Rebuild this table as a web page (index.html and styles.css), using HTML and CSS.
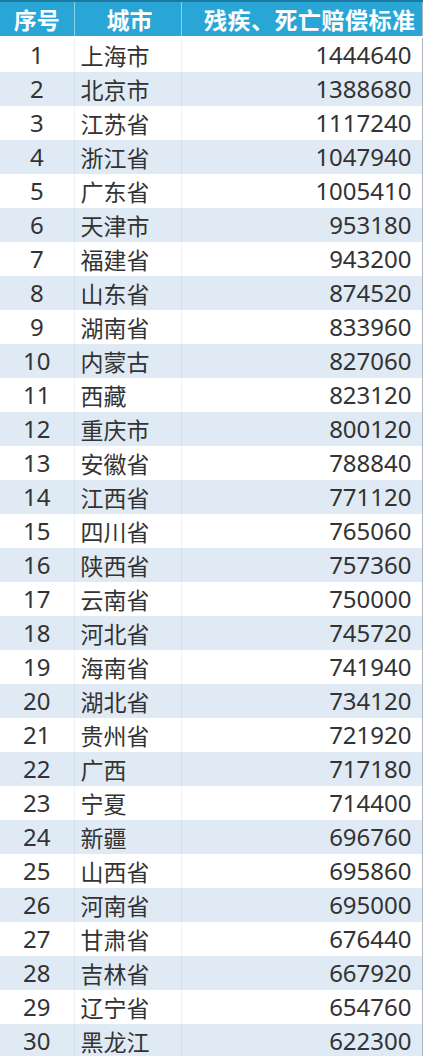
FILE: index.html
```html
<!DOCTYPE html>
<html lang="zh">
<head>
<meta charset="utf-8">
<link rel="stylesheet" href="styles.css">
</head>
<body>
<div class="wrap">
<table class="tbl">
<colgroup><col class="c1"><col class="c2"><col class="c3"></colgroup>
<thead>
<tr><th class="no">序号</th><th class="city">城市</th><th class="val">残疾、死亡赔偿标准</th></tr>
</thead>
<tbody>
<tr><td class="no">1</td><td class="city">上海市</td><td class="val">1444640</td></tr>
<tr><td class="no">2</td><td class="city">北京市</td><td class="val">1388680</td></tr>
<tr><td class="no">3</td><td class="city">江苏省</td><td class="val">1117240</td></tr>
<tr><td class="no">4</td><td class="city">浙江省</td><td class="val">1047940</td></tr>
<tr><td class="no">5</td><td class="city">广东省</td><td class="val">1005410</td></tr>
<tr><td class="no">6</td><td class="city">天津市</td><td class="val">953180</td></tr>
<tr><td class="no">7</td><td class="city">福建省</td><td class="val">943200</td></tr>
<tr><td class="no">8</td><td class="city">山东省</td><td class="val">874520</td></tr>
<tr><td class="no">9</td><td class="city">湖南省</td><td class="val">833960</td></tr>
<tr><td class="no">10</td><td class="city">内蒙古</td><td class="val">827060</td></tr>
<tr><td class="no">11</td><td class="city">西藏</td><td class="val">823120</td></tr>
<tr><td class="no">12</td><td class="city">重庆市</td><td class="val">800120</td></tr>
<tr><td class="no">13</td><td class="city">安徽省</td><td class="val">788840</td></tr>
<tr><td class="no">14</td><td class="city">江西省</td><td class="val">771120</td></tr>
<tr><td class="no">15</td><td class="city">四川省</td><td class="val">765060</td></tr>
<tr><td class="no">16</td><td class="city">陕西省</td><td class="val">757360</td></tr>
<tr><td class="no">17</td><td class="city">云南省</td><td class="val">750000</td></tr>
<tr><td class="no">18</td><td class="city">河北省</td><td class="val">745720</td></tr>
<tr><td class="no">19</td><td class="city">海南省</td><td class="val">741940</td></tr>
<tr><td class="no">20</td><td class="city">湖北省</td><td class="val">734120</td></tr>
<tr><td class="no">21</td><td class="city">贵州省</td><td class="val">721920</td></tr>
<tr><td class="no">22</td><td class="city">广西</td><td class="val">717180</td></tr>
<tr><td class="no">23</td><td class="city">宁夏</td><td class="val">714400</td></tr>
<tr><td class="no">24</td><td class="city">新疆</td><td class="val">696760</td></tr>
<tr><td class="no">25</td><td class="city">山西省</td><td class="val">695860</td></tr>
<tr><td class="no">26</td><td class="city">河南省</td><td class="val">695000</td></tr>
<tr><td class="no">27</td><td class="city">甘肃省</td><td class="val">676440</td></tr>
<tr><td class="no">28</td><td class="city">吉林省</td><td class="val">667920</td></tr>
<tr><td class="no">29</td><td class="city">辽宁省</td><td class="val">654760</td></tr>
<tr><td class="no">30</td><td class="city">黑龙江</td><td class="val">622300</td></tr>
</tbody>
</table>
</div>
</body>
</html>
```

FILE: styles.css
```css
html, body {
  margin: 0;
  padding: 0;
  background: #ffffff;
}
.wrap {
  width: 422px;
}
.tbl {
  width: 422px;
  border-collapse: collapse;
  table-layout: fixed;
  font-family: "Noto Sans", "Noto Sans CJK SC", sans-serif;
  color: #333333;
  border-right: 1px solid #a9b4bf;
}
.c1 { width: 74px; }
.c2 { width: 107px; }
.c3 { width: 241px; }
thead tr {
  height: 36px;
  background: #29a6d6;
  border-top: 2px solid #1b78a0;
}
th {
  color: #ffffff;
  font-family: "Noto Sans CJK SC", sans-serif;
  font-weight: 700;
  font-size: 23px;
  line-height: 32px;
  padding: 0;
  border-left: 1px solid #8fd2ec;
  border-bottom: 2px solid #ffffff;
  white-space: nowrap;
}
th:first-child { border-left: none; }
th.no { text-align: center; }
th.city { text-align: center; padding-left: 4px; }
th.val { text-align: right; padding-right: 6px; letter-spacing: 0.5px; }
tbody tr {
  height: 34px;
}
tbody tr:nth-child(even) {
  background: #dfeaf5;
}
td {
  padding: 0;
  font-size: 23px;
  line-height: 34px;
  white-space: nowrap;
  border-left: 1px solid #eef2f6;
}
tbody tr:nth-child(even) td {
  border-left-color: #d2dfec;
}
td:first-child { border-left: none; }
td.no {
  text-align: center;
  font-size: 24px;
}
td.city {
  font-family: "Noto Sans CJK SC", sans-serif;
  text-align: left;
  padding-left: 6px;
}
td.val {
  text-align: right;
  padding-right: 10px;
  font-size: 24px;
}
```
